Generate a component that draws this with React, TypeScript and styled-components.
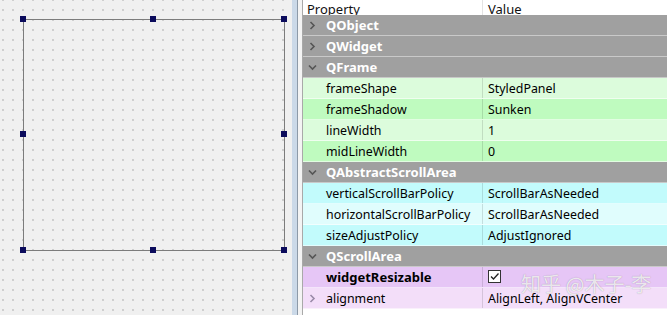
import React from "react";
import styled, { createGlobalStyle } from "styled-components";

type Tint = "green" | "cyan" | "purple";

type Prop = {
  name: string;
  value?: string;
  check?: boolean;
  bold?: boolean;
  more?: boolean;
};

type Group = {
  title: string;
  open: boolean;
  tint?: Tint;
  props: Prop[];
};

const groups: Group[] = [
  { title: "QObject", open: false, props: [] },
  { title: "QWidget", open: false, props: [] },
  {
    title: "QFrame",
    open: true,
    tint: "green",
    props: [
      { name: "frameShape", value: "StyledPanel" },
      { name: "frameShadow", value: "Sunken" },
      { name: "lineWidth", value: "1" },
      { name: "midLineWidth", value: "0" },
    ],
  },
  {
    title: "QAbstractScrollArea",
    open: true,
    tint: "cyan",
    props: [
      { name: "verticalScrollBarPolicy", value: "ScrollBarAsNeeded" },
      { name: "horizontalScrollBarPolicy", value: "ScrollBarAsNeeded" },
      { name: "sizeAdjustPolicy", value: "AdjustIgnored" },
    ],
  },
  {
    title: "QScrollArea",
    open: true,
    tint: "purple",
    props: [
      { name: "widgetResizable", check: true, bold: true },
      { name: "alignment", value: "AlignLeft, AlignVCenter", more: true },
    ],
  },
];

// two shades per class, alternating row by row
const tints: Record<Tint, [string, string]> = {
  green: ["#dcfcdc", "#bffbbf"],
  cyan: ["#c2fbfc", "#e0fdfd"],
  purple: ["#e6c6f6", "#f3def9"],
};

const GlobalStyle = createGlobalStyle`
  html, body {
    margin: 0;
    padding: 0;
    background: #f0f0f0;
  }
  body {
    font-family: "Noto Sans", "Liberation Sans", sans-serif;
  }
`;

const App: React.FC = () => {
  return (
    <>
      <GlobalStyle />
      <Page>
        <Canvas>
          <Frame>
            <Handle $x="left" $y="top" />
            <Handle $x="mid" $y="top" />
            <Handle $x="right" $y="top" />
            <Handle $x="left" $y="mid" />
            <Handle $x="right" $y="mid" />
            <Handle $x="left" $y="bottom" />
            <Handle $x="mid" $y="bottom" />
            <Handle $x="right" $y="bottom" />
          </Frame>
        </Canvas>
        <Splitter />
        <Editor>
          <HeaderRow>
            <HeaderCell>Property</HeaderCell>
            <HeaderCell $value>Value</HeaderCell>
          </HeaderRow>
          {groups.map((g) => (
            <React.Fragment key={g.title}>
              <GroupRow>
                <Arrow open={g.open} color="#555" />
                <GroupTitle>{g.title}</GroupTitle>
              </GroupRow>
              {g.tint &&
                g.props.map((p, i) => (
                  <PropRow key={p.name} $bg={tints[g.tint!][i % 2]}>
                    <NameCell $bold={p.bold}>
                      {p.more && <Arrow open={false} color="#9a8aa8" />}
                      {p.name}
                    </NameCell>
                    <ValueCell>
                      {p.check ? (
                        <CheckBox>
                          <svg width="11" height="11" viewBox="0 0 11 11">
                            <path
                              d="M2 5.5 L4.5 8 L9.5 2.5"
                              fill="none"
                              stroke="#222"
                              strokeWidth="1.3"
                            />
                          </svg>
                        </CheckBox>
                      ) : (
                        p.value
                      )}
                    </ValueCell>
                  </PropRow>
                ))}
            </React.Fragment>
          ))}
          <Watermark>知乎 @木子-李</Watermark>
        </Editor>
      </Page>
    </>
  );
};

export default App;

const Arrow: React.FC<{ open: boolean; color: string }> = ({ open, color }) => (
  <ArrowBox>
    <svg width="9" height="9" viewBox="0 0 9 9">
      <path
        d={open ? "M1 2.5 L4.5 6 L8 2.5" : "M2.5 1 L6 4.5 L2.5 8"}
        fill="none"
        stroke={color}
        strokeWidth="1.6"
      />
    </svg>
  </ArrowBox>
);

const Page = styled.div`
  display: flex;
  width: 667px;
  height: 315px;
  overflow: hidden;
`;

const Canvas = styled.div`
  width: 292px;
  flex: none;
  box-sizing: border-box;
  padding: 19px 0 0 23px;
  background-color: #f0f0f0;
  background-image: radial-gradient(circle, #bcbcbc 0.6px, transparent 0.9px);
  background-size: 10px 10px;
  background-position: -2px 5px;
`;

const Frame = styled.div`
  position: relative;
  width: 262px;
  height: 232px;
  box-sizing: border-box;
  border: 1px solid #7c7c7c;
`;

const Handle = styled.span<{
  $x: "left" | "mid" | "right";
  $y: "top" | "mid" | "bottom";
}>`
  position: absolute;
  width: 6px;
  height: 6px;
  background: #0b0b5c;
  left: ${(p) =>
    p.$x === "left" ? "-4px" : p.$x === "mid" ? "calc(50% - 4px)" : "calc(100% - 3px)"};
  top: ${(p) =>
    p.$y === "top" ? "-4px" : p.$y === "mid" ? "calc(50% - 4px)" : "calc(100% - 3px)"};
`;

const Splitter = styled.div`
  width: 11px;
  flex: none;
  box-sizing: border-box;
  background: linear-gradient(
    to right,
    #cbd9e8 0,
    #cbd9e8 5px,
    #8d9aa8 5px,
    #8d9aa8 6px,
    #f4f4f4 6px,
    #f4f4f4 10px,
    #a9a9a9 10px
  );
`;

const Editor = styled.div`
  position: relative;
  flex: 1;
  background: #fff;
  display: flex;
  flex-direction: column;
  font-size: 12.4px;
  color: #000;
`;

const HeaderRow = styled.div`
  display: grid;
  grid-template-columns: 179px 1fr;
  height: 15px;
  overflow: hidden;
  align-items: end;
`;

const HeaderCell = styled.div<{ $value?: boolean }>`
  line-height: 19px;
  height: 19px;
  padding-left: ${(p) => (p.$value ? "5px" : "4px")};
  border-left: ${(p) => (p.$value ? "1px solid #e3e3e3" : "none")};
  font-size: 13px;
  color: #111;
`;

const GroupRow = styled.div`
  display: flex;
  align-items: center;
  height: 20px;
  background: #a0a0a0;
  border-bottom: 1px solid #c9c9c9;
`;

const ArrowBox = styled.span`
  display: inline-flex;
  width: 23px;
  padding-left: 5px;
  box-sizing: border-box;
  flex: none;
`;

const GroupTitle = styled.span`
  color: #fff;
  font-weight: 700;
  font-size: 13px;
`;

const PropRow = styled.div<{ $bg: string }>`
  display: grid;
  grid-template-columns: 179px 1fr;
  height: 20px;
  background: ${(p) => p.$bg};
  border-bottom: 1px solid rgba(255, 255, 255, 0.55);
`;

const NameCell = styled.div<{ $bold?: boolean }>`
  display: flex;
  align-items: center;
  padding-left: 23px;
  font-weight: ${(p) => (p.$bold ? 700 : 400)};
  font-size: ${(p) => (p.$bold ? "13px" : "inherit")};
  & > span {
    margin-left: -23px;
  }
`;

const ValueCell = styled.div`
  display: flex;
  align-items: center;
  padding-left: 5px;
  border-left: 1px solid rgba(0, 0, 0, 0.12);
`;

const CheckBox = styled.span`
  display: inline-flex;
  align-items: center;
  justify-content: center;
  width: 13px;
  height: 13px;
  box-sizing: border-box;
  border: 1px solid #333;
  background: #fff;
  margin-top: -2px;
`;

const Watermark = styled.div`
  position: absolute;
  left: 218px;
  top: 269px;
  font-family: "Noto Sans CJK SC", sans-serif;
  font-size: 20px;
  color: rgba(255, 255, 255, 0.8);
  text-shadow: 0 0 1px rgba(60, 60, 60, 0.45);
  pointer-events: none;
  white-space: nowrap;
`;
